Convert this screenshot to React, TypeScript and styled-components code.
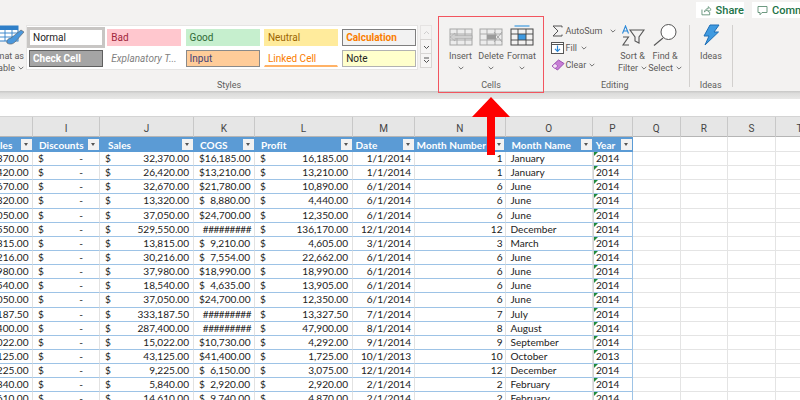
import React from "react";
import styled, { createGlobalStyle } from "styled-components";

const Global = createGlobalStyle`
  html, body { margin: 0; padding: 0; background: #fff; }
  #root { width: 800px; height: 400px; overflow: hidden; }
  * { box-sizing: border-box; }
`;

const COLS = "33px 67px 94px 61px 98px 62px 90.5px 87.5px 40px 47.5px 47.5px 48px 48px 30px";
const UI = `Roboto, "Open Sans", sans-serif`;
const SHEET = `Lato, "Open Sans", sans-serif`;

const Page = styled.div`
  position: relative;
  width: 800px;
  height: 400px;
  overflow: hidden;
  background: #fff;
`;

const Ribbon = styled.div`
  height: 91px;
  background: #f3f2f1;
  font-family: ${UI};
  color: #5c5a58;
`;
const TopActions = styled.div`
  height: 20px;
  padding-top: 2px;
  display: flex;
  justify-content: flex-start;
  gap: 8px;
  padding-left: 696px;
  width: 900px;
`;
const ActionButton = styled.div<{ $w: number }>`
  width: ${(p) => p.$w}px;
  height: 16px;
  flex: none;
  background: #fff;
  display: flex;
  align-items: center;
  gap: 4px;
  padding-left: 5px;
  color: #217346;
  font-size: 11px;
  font-weight: 500;
  white-space: nowrap;
`;
const Groups = styled.div`
  height: 71px;
  display: flex;
  padding-top: 5px;
`;
const Group = styled.div<{ $w: number; $ml?: number; $sep?: boolean }>`
  width: ${(p) => p.$w}px;
  margin-left: ${(p) => p.$ml ?? 0}px;
  flex: none;
  display: flex;
  flex-direction: column;
  ${(p) => (p.$sep ? "border-right: 1px solid #d2d0ce; margin-bottom: 4px;" : "")}
`;
const GroupBody = styled.div<{ $pl?: number }>`
  height: 54px;
  flex: none;
  display: flex;
  padding-left: ${(p) => p.$pl ?? 0}px;
`;
const GroupLabel = styled.div<{ $pr?: number }>`
  height: 12px;
  line-height: 12px;
  font-size: 9px;
  text-align: center;
  color: #605e5c;
  padding-right: ${(p) => p.$pr ?? 0}px;
`;
const BigButton = styled.div<{ $w: number }>`
  width: ${(p) => p.$w}px;
  flex: none;
  display: flex;
  flex-direction: column;
  align-items: center;
`;
const BigIcon = styled.div`
  height: 21px;
  margin-bottom: 4px;
  display: flex;
  align-items: flex-end;
  justify-content: center;
`;
const BigText = styled.div`
  height: 12px;
  line-height: 12px;
  font-size: 9px;
  white-space: nowrap;
  display: flex;
  align-items: center;
  justify-content: center;
  gap: 3px;
`;
const FormatTable = styled.div`
  width: 26px;
  flex: none;
  display: flex;
  flex-direction: column;
  align-items: flex-end;
  overflow: hidden;
`;
const ClippedText = styled(BigText)`
  flex: none;
  justify-content: flex-end;
  padding-right: 2px;
`;
const Gallery = styled.div`
  display: flex;
  height: 45px;
`;
const StyleGrid = styled.div`
  width: 392px;
  height: 45px;
  background: #fff;
  border: 1px solid #e6e5e4;
  padding: 3px 0 0 2px;
  display: grid;
  grid-template-columns: repeat(5, 74px);
  grid-template-rows: 17px 17px;
  column-gap: 4.3px;
  row-gap: 4px;
`;
const StyleCell = styled.div<{ $bg?: string; $color: string; $border?: string; $bottom?: string; $italic?: boolean; $bold?: boolean; $ring?: boolean }>`
  background: ${(p) => p.$bg ?? "transparent"};
  color: ${(p) => p.$color};
  border: ${(p) => (p.$border ? `1px solid ${p.$border}` : "1px solid transparent")};
  ${(p) => (p.$bottom ? `border-bottom: 2px solid ${p.$bottom};` : "")}
  ${(p) => (p.$italic ? "font-style: italic;" : "")}
  font-weight: ${(p) => (p.$bold ? 700 : 400)};
  ${(p) => (p.$ring ? "outline: 2px solid #c8c6c4; outline-offset: 0;" : "")}
  font-size: 10px;
  line-height: 15px;
  padding-left: 3px;
  white-space: nowrap;
  overflow: hidden;
`;
const Scroller = styled.div`
  width: 12px;
  margin-left: 2px;
  display: flex;
  flex-direction: column;
`;
const ScrollBtn = styled.div<{ $dim?: boolean }>`
  height: 15px;
  border: 1px solid #d8d6d4;
  margin-top: -1px;
  display: flex;
  align-items: center;
  justify-content: center;
  background: #f6f5f4;
  opacity: ${(p) => (p.$dim ? 0.5 : 1)};
  &:first-child { margin-top: 0; }
`;
const SmallList = styled.div`
  width: 66px;
  flex: none;
  display: flex;
  flex-direction: column;
  gap: 5px;
`;
const SmallRow = styled.div`
  height: 12px;
  display: flex;
  align-items: center;
  font-size: 9px;
  white-space: nowrap;
`;
const SmallIcon = styled.span`
  width: 14px;
  margin-right: 1px;
  display: flex;
  justify-content: center;
  flex: none;
`;
const Spread = styled.span<{ $w: number }>`
  display: inline-block;
  width: ${(p) => p.$w}px;
`;
const Shade = styled.div`
  height: 8px;
  background: linear-gradient(#c6c6c5, #dcdcdb 30%, #e8e8e7 100%);
`;
const FormulaBar = styled.div`
  height: 18px;
  background: #fff;
  border-bottom: 1px solid #d4d4d4;
`;
const SheetGrid = styled.div`
  font-family: ${SHEET};
  font-size: 10.1px;
  color: #222;
`;
const ColHead = styled.div`
  display: grid;
  grid-template-columns: ${COLS};
  height: 20px;
  background: #e6e6e6;
  border-bottom: 1px solid #b5b5b5;
`;
const ColLetter = styled.div`
  font-family: ${UI};
  font-size: 10px;
  color: #444;
  text-align: center;
  line-height: 23px;
  border-right: 1px solid #c8c8c8;
`;
const Row = styled.div<{ $h: number }>`
  display: grid;
  grid-template-columns: ${COLS};
  height: ${(p) => p.$h}px;
`;
const HeadCell = styled.div<{ $pl: number }>`
  background: #5b9bd5;
  color: #fff;
  font-weight: 700;
  display: flex;
  align-items: center;
  justify-content: space-between;
  padding: 0 1.5px 0 ${(p) => p.$pl}px;
  white-space: nowrap;
  overflow: hidden;
  font-size: 10px;
  letter-spacing: 0.05px;
`;
const FilterBtn = styled.span`
  width: 11px;
  height: 11px;
  flex: none;
  background: #f2f2f2;
  display: flex;
  align-items: center;
  justify-content: center;
  &::after {
    content: "";
    border-left: 2.5px solid transparent;
    border-right: 2.5px solid transparent;
    border-top: 3px solid #555;
  }
`;
const Cell = styled.div<{ $align?: string; $pl?: number; $pr?: number }>`
  display: flex;
  align-items: center;
  justify-content: ${(p) => p.$align ?? "flex-start"};
  padding-left: ${(p) => p.$pl ?? 0}px;
  padding-right: ${(p) => p.$pr ?? 0}px;
  border-bottom: 1px solid #9dc3e6;
  border-right: 1px solid #e2e2e2;
  white-space: nowrap;
  overflow: hidden;
  line-height: 13px;
`;
const HashCell = styled(Cell)`
  letter-spacing: -0.5px;
`;
const YearCell = styled(Cell)`
  position: relative;
  border-left: 1px solid #d4d4d4;
  border-right: 1px solid #9dc3e6;
  &::before {
    content: "";
    position: absolute;
    left: 0;
    top: 0;
    border-top: 4px solid #1e8a3c;
    border-right: 4px solid transparent;
  }
`;
const BlankCell = styled.div`
  border-bottom: 1px solid #e4e4e4;
  border-right: 1px solid #e4e4e4;
`;
const Frame = styled.div`
  position: absolute;
  left: 438px;
  top: 16px;
  width: 106px;
  height: 77px;
  border: 1px solid #f2555f;
  pointer-events: none;
`;
const Arrow = styled.svg`
  position: absolute;
  left: 472px;
  top: 97px;
`;

const Chev = () => (
  <svg width="6" height="4" viewBox="0 0 6 4">
    <path d="M.7.8 3 3.1 5.3.8" fill="none" stroke="#666" strokeWidth=".9" />
  </svg>
);

const GridIcon = ({ mode }: { mode: "insert" | "delete" | "format" }) => {
  const line = mode === "format" ? "#444" : "#a6a6a6";
  return (
    <svg width="24" height="21" viewBox="0 0 24 21">
      {mode === "format" && <path d="M4.5 1H19.5" stroke="#3f9ae0" strokeWidth="1.2" />}
      <rect x="1" y="4" width="22" height="16" fill={mode === "format" ? "#f3f2f1" : "#ececec"} stroke={line} />
      {mode === "format" && <rect x="8" y="9" width="8" height="6" fill="#3f9ae0" />}
      <path d="M8 4V20M16 4V20M1 9H23M1 15H23" stroke={line} fill="none" strokeWidth=".9" />
      {mode === "insert" && <path d="M1 12 6 8V10.4H23V13.6H6V16Z" fill="#d0d0d0" stroke="#a6a6a6" strokeWidth=".7" />}
      {mode === "delete" && (
        <>
          <rect x="8" y="9.5" width="9" height="5" fill="#9a9a9a" />
          <path d="M15 7 23 17M23 7 15 17" stroke="#a8a8a8" strokeWidth="1" />
        </>
      )}
    </svg>
  );
};

const TableIcon = () => (
  <svg width="26" height="21" viewBox="0 0 26 21">
    <rect x="-2" y="1" width="20" height="15" fill="#fff" stroke="#2f7fc8" />
    <rect x="-2" y="1" width="20" height="4" fill="#2f7fc8" />
    <path d="M5 1V16M12 1V16M-2 8H18M-2 12H18" stroke="#2f7fc8" strokeWidth=".9" />
    <path d="M7 18C6 15 9 13 11 13L21 5 24 7 15 17C13 19 10 20 7 18Z" fill="#4a97dc" stroke="#5b5b5b" strokeWidth=".6" />
  </svg>
);

const SortIcon = () => (
  <svg width="24" height="21" viewBox="0 0 24 21">
    <path d="M1.5 8.5 4.5 1 7.5 8.5M2.6 6H6.4" fill="none" stroke="#2b88d8" strokeWidth="1.1" />
    <path d="M2 12H7.5L2 20H8" fill="none" stroke="#555" strokeWidth="1.1" />
    <path d="M9 5H23L18 12V18L14 16V12Z" fill="none" stroke="#555" strokeWidth="1.1" />
  </svg>
);

const FindIcon = () => (
  <svg width="24" height="22" viewBox="0 0 24 22">
    <circle cx="15.5" cy="8" r="7.5" fill="#fff" stroke="#555" strokeWidth="1" />
    <path d="M10 14 1 21.5" stroke="#555" strokeWidth="1.1" />
  </svg>
);

const BoltIcon = () => (
  <svg width="18" height="22" viewBox="0 0 18 22">
    <path d="M8 1H17L12 8H16.5L3 21 7 12H2Z" fill="#3f9ae0" stroke="#1f6fb5" strokeWidth="1" strokeLinejoin="round" />
  </svg>
);

const SigmaIcon = () => (
  <svg width="11" height="12" viewBox="0 0 11 12">
    <path d="M10 2.5V1H1L6 6 1 11H10V9.5" fill="none" stroke="#555" strokeWidth="1" />
  </svg>
);
const FillIcon = () => (
  <svg width="13" height="12" viewBox="0 0 13 12">
    <rect x=".5" y=".5" width="12" height="11" fill="#fff" stroke="#555" />
    <path d="M.5 2.5H12.5" stroke="#555" />
    <path d="M6.5 3.5V9M4 6.8 6.5 9.4 9 6.8" fill="none" stroke="#2b88d8" strokeWidth="1.2" />
  </svg>
);
const EraserIcon = () => (
  <svg width="14" height="12" viewBox="0 0 14 12">
    <path d="M1 7 7.5 1 13 4.5 6.5 11Z" fill="#c77ed6" stroke="#9b4fb0" />
    <path d="M4 9.5 1 7 4 4.5 7 7Z" fill="#f3e4f6" stroke="#9b4fb0" strokeWidth=".7" />
  </svg>
);
const ShareIcon = () => (
  <svg width="11" height="11" viewBox="0 0 11 11">
    <path d="M1 4.5V10H9V7M3.5 7C4 4.5 6 3.5 7.5 3.5V1.5L10.5 4.5 7.5 7V5.2C6 5.2 4.5 5.8 3.5 7Z" fill="none" stroke="#5f8f74" strokeWidth=".9" />
  </svg>
);
const CommentIcon = () => (
  <svg width="11" height="11" viewBox="0 0 11 11">
    <path d="M1 1.5H10V7.5H5L3 9.8V7.5H1Z" fill="none" stroke="#5f8f74" strokeWidth=".9" />
  </svg>
);
const UpIcon = ({ down, bar, color }: { down?: boolean; bar?: boolean; color?: string }) => (
  <svg width="7" height="7" viewBox="0 0 7 7">
    {bar && <path d="M1 1H6" stroke={color ?? "#555"} />}
    <path d={down ? "M1 3 3.5 5.5 6 3" : "M1 5 3.5 2.5 6 5"} fill="none" stroke={color ?? "#555"} />
  </svg>
);

const sales = ["370.00","420.00","670.00","320.00","050.00","550.00","815.00","216.00","980.00","540.00","050.00","187.50","400.00","022.00","125.00","225.00","840.00","610.00"];
const gross = ["32,370.00","26,420.00","32,670.00","13,320.00","37,050.00","529,550.00","13,815.00","30,216.00","37,980.00","18,540.00","37,050.00","333,187.50","287,400.00","15,022.00","43,125.00","9,225.00","5,840.00","14,610.00"];
const cogs = ["16,185.00","13,210.00","21,780.00","8,880.00","24,700.00","","9,210.00","7,554.00","18,990.00","4,635.00","24,700.00","","","10,730.00","41,400.00","6,150.00","2,920.00","9,740.00"];
const profit = ["16,185.00","13,210.00","10,890.00","4,440.00","12,350.00","136,170.00","4,605.00","22,662.00","18,990.00","13,905.00","12,350.00","13,327.50","47,900.00","4,292.00","1,725.00","3,075.00","2,920.00","4,870.00"];
const dates = ["1/1/2014","1/1/2014","6/1/2014","6/1/2014","6/1/2014","12/1/2014","3/1/2014","6/1/2014","6/1/2014","6/1/2014","6/1/2014","7/1/2014","8/1/2014","9/1/2014","10/1/2013","12/1/2014","2/1/2014","2/1/2014"];
const months = ["January","January","June","June","June","December","March","June","June","June","June","July","August","September","October","December","February","February"];

const letters = ["", "I", "J", "K", "L", "M", "N", "O", "P", "Q", "R", "S", "T", "U"];
const heads: [string, number][] = [["les", 0], ["Discounts", 6], ["Sales", 8], ["COGS", 6], ["Profit", 6], ["Date", 2.6], ["Month Number", 1.6], ["Month Name", 6], ["Year", 2.7]];

export default function App() {
  return (
    <Page>
      <Global />
      <Ribbon>
        <TopActions>
          <ActionButton $w={48}><ShareIcon />Share</ActionButton>
          <ActionButton $w={80}><CommentIcon />Comments</ActionButton>
        </TopActions>
        <Groups>
          <FormatTable>
            <BigIcon><TableIcon /></BigIcon>
            <ClippedText>Format as</ClippedText>
            <ClippedText>Table <Chev /></ClippedText>
          </FormatTable>
          <Group $w={406}>
            <GroupBody>
              <Gallery>
                <StyleGrid>
                  <StyleCell $color="#222" $border="#c8c6c4" $ring>Normal</StyleCell>
                  <StyleCell $bg="#ffc7ce" $color="#a1263b">Bad</StyleCell>
                  <StyleCell $bg="#c6efce" $color="#2e6b34">Good</StyleCell>
                  <StyleCell $bg="#ffeb9c" $color="#9c6500">Neutral</StyleCell>
                  <StyleCell $bg="#f2f2f2" $color="#fa7d00" $border="#7f7f7f" $bold>Calculation</StyleCell>
                  <StyleCell $bg="#a5a5a5" $color="#fff" $border="#5f5f5f" $bold>Check Cell</StyleCell>
                  <StyleCell $color="#7f7f7f" $italic>Explanatory T...</StyleCell>
                  <StyleCell $bg="#ffcc99" $color="#3f3f76" $border="#8a8a8a">Input</StyleCell>
                  <StyleCell $color="#fa7d00" $bottom="#ffb266">Linked Cell</StyleCell>
                  <StyleCell $bg="#ffffcc" $color="#222" $border="#b2b2b2">Note</StyleCell>
                </StyleGrid>
                <Scroller>
                  <ScrollBtn $dim><UpIcon color="#aaa" /></ScrollBtn>
                  <ScrollBtn><UpIcon down /></ScrollBtn>
                  <ScrollBtn><UpIcon down bar /></ScrollBtn>
                </Scroller>
              </Gallery>
            </GroupBody>
            <GroupLabel>Styles</GroupLabel>
          </Group>
          <Group $w={105} $ml={6.5}>
            <GroupBody $pl={7}>
              <BigButton $w={30}><BigIcon><GridIcon mode="insert" /></BigIcon><BigText>Insert</BigText><BigText><Chev /></BigText></BigButton>
              <BigButton $w={31}><BigIcon><GridIcon mode="delete" /></BigIcon><BigText>Delete</BigText><BigText><Chev /></BigText></BigButton>
              <BigButton $w={30}><BigIcon><GridIcon mode="format" /></BigIcon><BigText>Format</BigText><BigText><Chev /></BigText></BigButton>
            </GroupBody>
            <GroupLabel>Cells</GroupLabel>
          </Group>
          <Group $w={142.5} $ml={4} $sep>
            <GroupBody $pl={3}>
              <SmallList>
                <SmallRow><SmallIcon><SigmaIcon /></SmallIcon>AutoSum<Spread $w={8} /><Chev /></SmallRow>
                <SmallRow><SmallIcon><FillIcon /></SmallIcon>Fill<Spread $w={4} /><Chev /></SmallRow>
                <SmallRow><SmallIcon><EraserIcon /></SmallIcon>Clear<Spread $w={3} /><Chev /></SmallRow>
              </SmallList>
              <BigButton $w={32}><BigIcon><SortIcon /></BigIcon><BigText>Sort &amp;</BigText><BigText>Filter <Chev /></BigText></BigButton>
              <BigButton $w={33}><BigIcon><FindIcon /></BigIcon><BigText>Find &amp;</BigText><BigText>Select <Chev /></BigText></BigButton>
            </GroupBody>
            <GroupLabel $pr={7}>Editing</GroupLabel>
          </Group>
          <Group $w={42.5} $sep>
            <GroupBody>
              <BigButton $w={42}><BigIcon><BoltIcon /></BigIcon><BigText>Ideas</BigText></BigButton>
            </GroupBody>
            <GroupLabel>Ideas</GroupLabel>
          </Group>
        </Groups>
      </Ribbon>
      <Shade />
      <FormulaBar />
      <SheetGrid>
        <ColHead>
          {letters.map((l, i) => <ColLetter key={i}>{l}</ColLetter>)}
        </ColHead>
        <Row $h={15}>
          {heads.map(([t, pl]) => (
            <HeadCell key={t} $pl={pl}>{t}<FilterBtn /></HeadCell>
          ))}
          <BlankCell /><BlankCell /><BlankCell /><BlankCell /><BlankCell />
        </Row>
        {sales.map((s, i) => (
          <Row $h={14.15} key={i}>
            <Cell $align="flex-end" $pr={3.5}>{s}</Cell>
            <Cell $align="space-between" $pl={5} $pr={16}><span>$</span><span>-</span></Cell>
            <Cell $align="space-between" $pl={5} $pr={4}><span>$</span><span>{gross[i]}</span></Cell>
            {cogs[i] ? (
              <Cell $align="space-between" $pl={5} $pr={4}><span>$</span><span>{cogs[i]}</span></Cell>
            ) : (
              <HashCell $align="flex-end" $pr={3}>#########</HashCell>
            )}
            <Cell $align="space-between" $pl={5} $pr={4}><span>$</span><span>{profit[i]}</span></Cell>
            <Cell $align="flex-end" $pr={3}>{dates[i]}</Cell>
            <Cell $align="flex-end" $pr={2}>{parseInt(dates[i], 10)}</Cell>
            <Cell $pl={5}>{months[i]}</Cell>
            <YearCell $pl={2}>{dates[i].slice(-4)}</YearCell>
            <BlankCell /><BlankCell /><BlankCell /><BlankCell /><BlankCell />
          </Row>
        ))}
      </SheetGrid>
      <Frame />
      <Arrow width="38" height="58" viewBox="0 0 38 58">
        <path d="M19 0 38 20H23V58H15V20H0Z" fill="#fe0000" />
      </Arrow>
    </Page>
  );
}
